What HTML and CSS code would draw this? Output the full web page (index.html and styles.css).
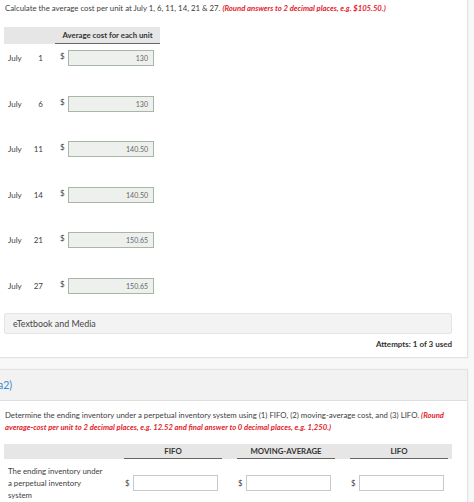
FILE: index.html
```html
<!DOCTYPE html>
<html lang="en">
<head>
<meta charset="utf-8">
<title>Average cost</title>
<link rel="stylesheet" href="styles.css">
</head>
<body>
<div class="page">
  <section class="card q1">
    <p class="prompt prompt-one">Calculate the average cost per unit at July 1, 6, 11, 14, 21 &amp; 27. <em class="hint">(Round answers to 2 decimal places, e.g. $105.50.)</em></p>
    <div class="cost-table">
      <div class="cost-head"><span class="head-blank"></span><span class="head-cell">Average cost for each unit</span></div>
      <div class="cost-rows">
        <div class="cost-row"><span class="month">July</span><span class="day">1</span><span class="cur">$</span><span class="field filled">130</span></div>
        <div class="cost-row"><span class="month">July</span><span class="day">6</span><span class="cur">$</span><span class="field filled">130</span></div>
        <div class="cost-row"><span class="month">July</span><span class="day">11</span><span class="cur">$</span><span class="field filled">140.50</span></div>
        <div class="cost-row"><span class="month">July</span><span class="day">14</span><span class="cur">$</span><span class="field filled">140.50</span></div>
        <div class="cost-row"><span class="month">July</span><span class="day">21</span><span class="cur">$</span><span class="field filled">150.65</span></div>
        <div class="cost-row"><span class="month">July</span><span class="day">27</span><span class="cur">$</span><span class="field filled">150.65</span></div>
      </div>
    </div>
    <div class="media">eTextbook and Media</div>
    <div class="attempts">Attempts: 1 of 3 used</div>
  </section>

  <section class="card q2">
    <header class="q2-head"><span class="part">a2)</span></header>
    <div class="q2-body">
      <p class="prompt prompt-two">Determine the ending inventory under a perpetual inventory system using (1) FIFO, (2) moving-average cost, and (3) LIFO. <em class="hint">(Round average-cost per unit to 2 decimal places, e.g. 12.52 and final answer to 0 decimal places, e.g. 1,250.)</em></p>
      <div class="inv-table">
        <div class="inv-head">
          <span class="inv-label-head"></span>
          <span class="inv-col"><span class="inv-title">FIFO</span></span>
          <span class="inv-col"><span class="inv-title">MOVING-AVERAGE</span></span>
          <span class="inv-col"><span class="inv-title">LIFO</span></span>
        </div>
        <div class="inv-row">
          <span class="inv-label">The ending inventory under a perpetual inventory system</span>
          <span class="inv-cell"><span class="cur2">$</span><span class="field empty"></span></span>
          <span class="inv-cell"><span class="cur2">$</span><span class="field empty"></span></span>
          <span class="inv-cell"><span class="cur2">$</span><span class="field empty"></span></span>
        </div>
      </div>
    </div>
  </section>
</div>
</body>
</html>
```

FILE: styles.css
```css
html, body {
  margin: 0;
  padding: 0;
}
body {
  background: #f8f8f8;
  font-family: Lato, "Open Sans", sans-serif;
  color: #404040;
  font-size: 7.8px;
  overflow: hidden;
}
.page {
  width: 468px;
  display: flex;
  flex-direction: column;
}
.card {
  background: #fff;
  border: 1px solid #e2e2e2;
  box-shadow: 0 0 2px rgba(0,0,0,0.05);
}
.q1 {
  margin: -1px 0 0 -1px;
  padding: 1px 15px 7px 1px;
}
.prompt {
  margin: 0;
  padding-left: 4px;
  line-height: 12px;
}
.hint {
  color: #e3232b;
  font-weight: 700;
  font-style: italic;
  line-height: 12px;
}
.prompt-one {
  padding-top: 1px;
  white-space: nowrap;
}
.prompt-one .hint {
  font-size: 7.7px;
}
.prompt-two .hint {
  font-size: 7.7px;
}
.cost-table {
  margin-top: 13px;
  margin-left: 3px;
  width: 156px;
}
.cost-head {
  display: flex;
  height: 17px;
  background: #e6e6e6;
}
.head-blank {
  width: 51px;
}
.head-cell {
  flex: 1;
  text-align: center;
  font-weight: 700;
  color: #333;
  line-height: 16px;
  border-bottom: 1px solid #666;
}
.cost-rows {
  display: flex;
  flex-direction: column;
  gap: 29.6px;
  padding-top: 6px;
}
.cost-row {
  display: grid;
  grid-template-columns: 26px 13px 25px 86px;
  align-items: center;
  height: 16px;
  font-size: 8px;
}
.month {
  padding-left: 4px;
}
.day {
  text-align: right;
}
.cur {
  padding-left: 17px;
  align-self: start;
  line-height: 12px;
}
.field {
  box-sizing: border-box;
  height: 16px;
  display: block;
}
.filled {
  background: #eef0ee;
  border: 1px solid #a7b6a7;
  text-align: right;
  padding-right: 5px;
  line-height: 14px;
  color: #666;
  font-size: 7px;
}
.media {
  margin: 19px 0 0 3px;
  height: 21px;
  box-sizing: border-box;
  background: #f3f3f3;
  border: 1px solid #e5e5e5;
  border-radius: 2px;
  padding-left: 8px;
  font-size: 8.9px;
  line-height: 19px;
  color: #444;
}
.attempts {
  margin-top: 4px;
  text-align: right;
  font-weight: 700;
  color: #333;
  line-height: 12px;
  font-size: 8px;
}
.q2 {
  margin: 11px 0 0 -1px;
}
.q2-head {
  height: 30px;
  background: #f2f2f2;
  border-bottom: 1px solid #dedede;
  display: flex;
  align-items: center;
}
.part {
  margin-left: -2px;
  color: #3a8acb;
  font-size: 10.5px;
}
.q2-body {
  padding: 8px 15px 20px 1px;
}
.inv-table {
  margin: 11px 0 0 3px;
}
.inv-head {
  display: grid;
  grid-template-columns: 117px 113px 113px 105px;
  height: 15px;
  background: #e6e6e6;
}
.inv-col {
  display: flex;
  padding-left: 3px;
}
.inv-title {
  box-sizing: border-box;
  width: 98px;
  height: 15px;
  text-align: center;
  font-weight: 700;
  color: #333;
  line-height: 14px;
  border-bottom: 1px solid #666;
}
.inv-row {
  display: grid;
  grid-template-columns: 117px 113px 113px 105px;
  align-items: center;
  padding-top: 6px;
}
.inv-label {
  padding-left: 4px;
  width: 98px;
  line-height: 12px;
}
.inv-cell {
  display: flex;
  align-items: center;
  padding-left: 4px;
}
.cur2 {
  width: 8px;
}
.empty {
  width: 85px;
  background: #fff;
  border: 1px solid #c9c9c9;
}
```
